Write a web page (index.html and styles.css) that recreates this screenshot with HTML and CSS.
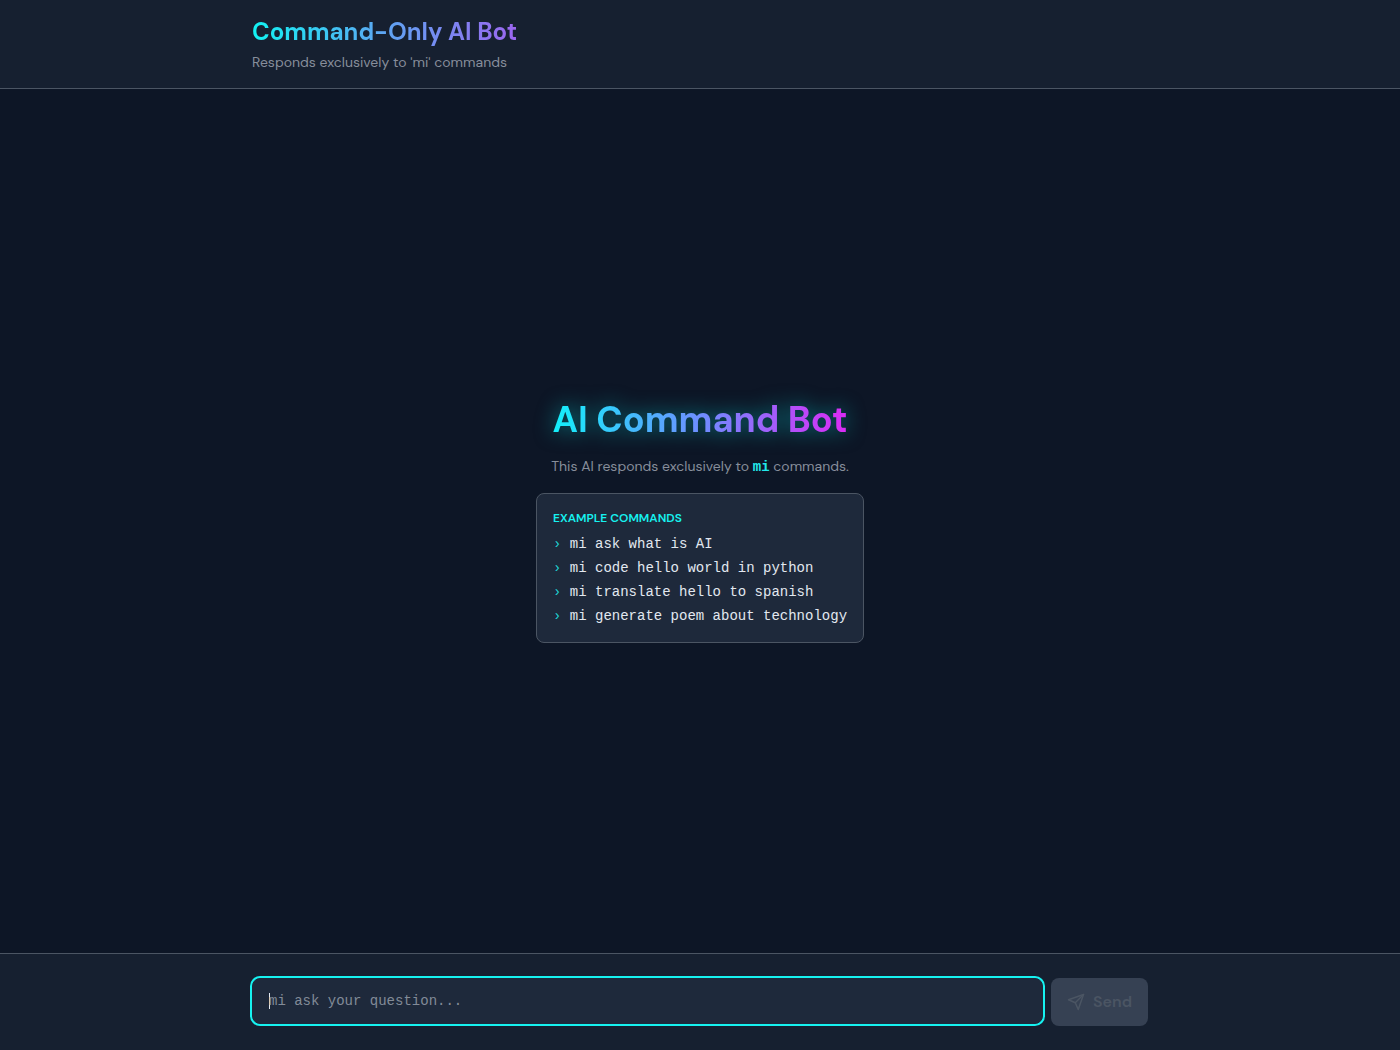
FILE: index.html
```html
<!DOCTYPE html>
<html lang="en">
<head>
    <meta charset="UTF-8">
    <meta name="viewport" content="width=device-width, initial-scale=1.0">
    <title>Command-Only AI Bot</title>
    <link rel="stylesheet" href="styles.css">
</head>
<body>
    <header>
        <div class="container">
            <h1 class="site-title">Command-Only AI Bot</h1>
            <p class="subtitle">Responds exclusively to 'mi' commands</p>
        </div>
    </header>

    <main>
        <h2 class="hero-title">AI Command Bot</h2>
        <p class="hero-text">This AI responds exclusively to <code>mi</code> commands.</p>

        <div class="examples">
            <h3>Example Commands</h3>
            <ul>
                <li>mi ask what is AI</li>
                <li>mi code hello world in python</li>
                <li>mi translate hello to spanish</li>
                <li>mi generate poem about technology</li>
            </ul>
        </div>
    </main>

    <footer>
        <form class="container command-form">
            <input type="text" class="command-input" placeholder="mi ask your question..." aria-label="Command" autocomplete="off" autofocus>
            <button type="submit" class="send-button" disabled>
                <svg width="18" height="18" viewBox="0 0 24 24" fill="none" stroke="currentColor" stroke-width="2" stroke-linecap="round" stroke-linejoin="round" aria-hidden="true">
                    <path d="M22 2 15 22 11 13 2 9Z"/>
                    <path d="M22 2 11 13"/>
                </svg>
                <span>Send</span>
            </button>
        </form>
    </footer>
</body>
</html>
```
FILE: styles.css
```css
* {
    box-sizing: border-box;
    margin: 0;
    padding: 0;
}

body {
    font-family: 'DM Sans', 'Inter', sans-serif;
    background-color: #0d1626;
    color: #e2e8f0;
    min-height: 100vh;
    display: flex;
    flex-direction: column;
}

.container {
    width: 100%;
    max-width: 896px;
    margin: 0 auto;
}

header {
    background-color: #162030;
    border-bottom: 1px solid #4b5563;
    padding: 16px;
}

.site-title,
.hero-title {
    width: fit-content;
    background-clip: text;
    -webkit-background-clip: text;
    color: transparent;
}

.site-title {
    font-size: 24px;
    line-height: 32px;
    font-weight: 700;
    background-image: linear-gradient(to right, #12f2f2, #5ea5f3, #9b66ef);
}

.subtitle {
    margin-top: 4px;
    font-size: 14px;
    line-height: 20px;
    color: #878e9b;
}

main {
    flex: 1;
    display: flex;
    flex-direction: column;
    align-items: center;
    justify-content: center;
    padding: 16px;
}

.hero-title {
    font-size: 36px;
    line-height: 40px;
    font-weight: 700;
    background-image: linear-gradient(to right, #12f0fa, #6e8eff, #dc2af5);
    filter: drop-shadow(0 0 10px rgba(0, 240, 240, 0.5));
}

.hero-text {
    margin: 16px 0;
    font-size: 14px;
    line-height: 20px;
    color: #878e9b;
}

.hero-text code {
    font-family: 'Liberation Mono', monospace;
    font-size: 14px;
    font-weight: bold;
    color: #22e8ec;
}

.examples {
    background-color: #1e293b;
    border: 1px solid #4b5563;
    border-radius: 8px;
    padding: 16px;
}

.examples h3 {
    margin-bottom: 8px;
    font-size: 12px;
    line-height: 16px;
    font-weight: 600;
    text-transform: uppercase;
    color: #16f2f0;
}

.examples ul {
    list-style: none;
    display: flex;
    flex-direction: column;
    gap: 4px;
}

.examples li {
    font-family: 'Liberation Mono', monospace;
    font-size: 14px;
    line-height: 20px;
}

.examples li::before {
    content: '›\00a0';
    color: #1fd6d6;
}

footer {
    background-color: #162030;
    border-top: 1px solid #4b5563;
    padding: 24px 16px;
}

.command-form {
    display: flex;
    align-items: flex-start;
    gap: 8px;
}

.command-input {
    flex: 1;
    min-width: 0;
    height: 46px;
    padding: 0 16px;
    font-family: 'Liberation Mono', monospace;
    font-size: 14px;
    color: #e2e8f0;
    background-color: #1e293b;
    border: 1px solid #1e293b;
    border-radius: 8px;
    outline: none;
}

.command-input::placeholder {
    color: #828b98;
    opacity: 1;
}

.command-input:focus {
    box-shadow: 0 0 0 2px #16f2f0;
}

/* steady caret while the field is empty */
.command-input:focus:placeholder-shown {
    caret-color: transparent;
    background-image: linear-gradient(#e2e8f0, #e2e8f0);
    background-size: 1px 16px;
    background-position: 16px center;
    background-repeat: no-repeat;
}

.send-button {
    display: flex;
    align-items: center;
    gap: 8px;
    height: 48px;
    padding: 0 16px;
    font-family: inherit;
    font-size: 16px;
    line-height: 24px;
    font-weight: 600;
    color: #e2e8f0;
    background-color: #0891b2;
    border: none;
    border-radius: 8px;
}

.send-button:disabled {
    color: #4b5563;
    background-color: #364153;
}
```
